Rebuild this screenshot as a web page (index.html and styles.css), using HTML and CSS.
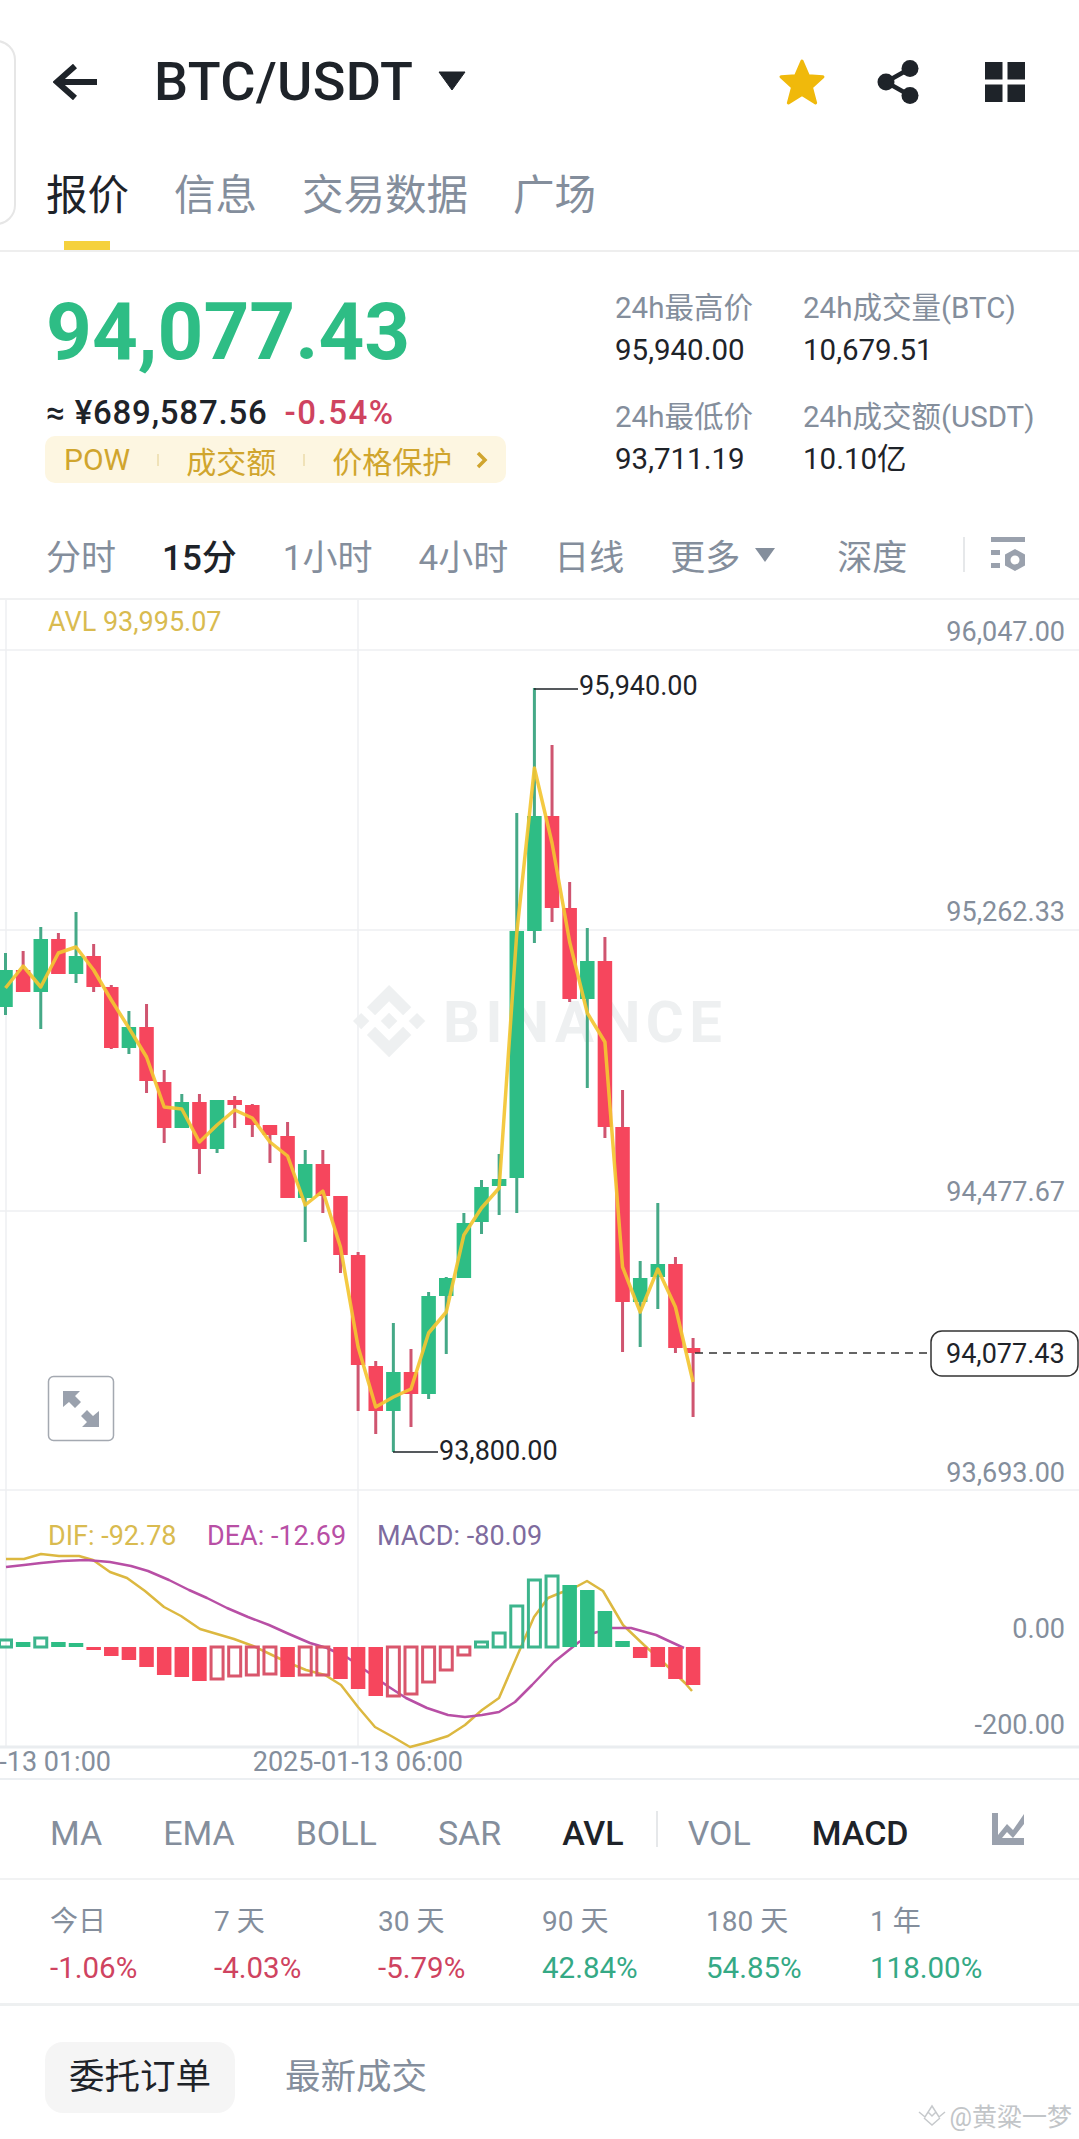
FILE: index.html
```html
<!DOCTYPE html>
<html lang="zh-CN">
<head>
  <meta charset="UTF-8" />
  <meta name="viewport" content="width=device-width, initial-scale=1.0"/>
  <title>BTC/USDT</title>
  <link rel="stylesheet" href="styles.css">
</head>
<body>
  <div class="page">
    <div class="side-tab"></div>

    <header class="topbar">
      <svg class="back" width="45" height="36" viewBox="0 0 45 36"><path d="M44 18H4M22 2 4 18l18 16" fill="none" stroke="#1e2329" stroke-width="6"/></svg>
      <h1 class="pair">BTC/USDT</h1>
      <svg class="caret" width="28" height="20" viewBox="0 0 28 20"><path d="M1 1h26L14 19z" fill="#1e2329" stroke="#1e2329" stroke-linejoin="round"/></svg>
      <div class="top-icons">
        <svg class="star" width="46" height="48" viewBox="0 0 44 46"><path d="M22 3l6 14 14 1-11 10 4 15-13-8-13 8 4-15L2 18l14-1z" fill="#f0b90b" stroke="#f0b90b" stroke-width="3" stroke-linejoin="round"/></svg>
        <svg width="42" height="44" viewBox="0 0 42 44"><g fill="#1e2329"><circle cx="9" cy="22" r="8.5"/><circle cx="33" cy="8.5" r="8.5"/><circle cx="33" cy="35.5" r="8.5"/></g><path d="M33 8.5 9 22l24 13.5" fill="none" stroke="#1e2329" stroke-width="4.5"/></svg>
        <svg class="apps" width="40" height="40" viewBox="0 0 40 40"><g fill="#1e2329"><rect width="17.500" height="17.500"/><rect x="22.500" width="17.500" height="17.500"/><rect y="22.500" width="17.500" height="17.500"/><rect x="22.500" y="22.500" width="17.500" height="17.500"/></g></svg>
      </div>
    </header>

    <nav class="tabs">
      <span class="tab active">报价</span>
      <span class="tab">信息</span>
      <span class="tab">交易数据</span>
      <span class="tab">广场</span>
    </nav>

    <section class="quote">
      <div class="quote-left">
        <div class="price">94,077.43</div>
        <div class="sub-price">≈ ¥689,587.56 <span class="down">-0.54%</span></div>
        <div class="tag">
          <span>POW</span><i></i><span>成交额</span><i></i><span>价格保护</span>
          <svg width="12" height="18" viewBox="0 0 12 18"><path d="M2 2l7 7-7 7" fill="none" stroke="#d0a52e" stroke-width="3.500"/></svg>
        </div>
      </div>
      <div class="stats">
        <div><p class="stat-label">24h最高价</p><p class="stat-value">95,940.00</p></div>
        <div><p class="stat-label">24h成交量(BTC)</p><p class="stat-value">10,679.51</p></div>
        <div><p class="stat-label">24h最低价</p><p class="stat-value">93,711.19</p></div>
        <div><p class="stat-label">24h成交额(USDT)</p><p class="stat-value">10.10亿</p></div>
      </div>
    </section>

    <div class="intervals">
      <span>分时</span>
      <span class="on">15分</span>
      <span>1小时</span>
      <span>4小时</span>
      <span>日线</span>
      <span class="more">更多<svg width="20" height="14" viewBox="0 0 20 14"><path d="M0 0h20L10 14z" fill="#848e9c"/></svg></span>
      <span class="depth">深度</span>
      <b class="divider"></b>
      <svg class="setup" width="34" height="35" viewBox="0 0 34 35"><g fill="#9aa1ad"><rect width="34" height="5"/><rect y="13" width="9" height="5"/><rect y="26" width="9" height="5"/><path fill-rule="evenodd" d="M24 12l10 5.500v11L24 34l-10-5.500v-11zM24 18.500a4.500 4.500 0 1 0 0 9 4.500 4.500 0 0 0 0-9z"/></g></svg>
    </div>

    <svg id="chart" class="chart" viewBox="0 600 1079 1178" width="1079" height="1178">
      <g class="grid">
        <path d="M0 650H1079M0 930H1079M0 1211H1079M0 1490H1079M6 600V1747M358 600V1747"/>
        <path class="base" d="M0 1747H1079"/>
      </g>

      <g class="watermark">
        <g transform="translate(353 985) scale(.57)">
          <path d="M38.730 53.200l24.590-24.580 24.600 24.600 14.300-14.310L63.320 0 24.430 38.900zM0 63.310l14.300-14.310 14.310 14.310-14.310 14.300zM38.730 73.410l24.590 24.590 24.600-24.600 14.310 14.290-38.900 38.910-38.910-38.880zM98.010 63.310l14.300-14.310 14.300 14.300-14.300 14.310zM77.830 63.300 63.320 48.780 48.810 63.280l14.510 14.500z"/>
        </g>
        <text x="443" y="1042">BINANCE</text>
      </g>

      <g id="candles"></g>
      <polyline id="avl" class="avl-line"/>

      <path class="leader" d="M534 689H578M393 1452H438"/>
      <text class="label dark" x="579" y="695">95,940.00</text>
      <text class="label dark" x="439" y="1460">93,800.00</text>
      <text class="label yellow" x="48" y="631">AVL 93,995.07</text>

      <g class="axis">
        <text x="1065" y="641">96,047.00</text>
        <text x="1065" y="921">95,262.33</text>
        <text x="1065" y="1201">94,477.67</text>
        <text x="1065" y="1482">93,693.00</text>
        <text x="1065" y="1638">0.00</text>
        <text x="1065" y="1734">-200.00</text>
      </g>

      <path class="last-line" d="M695 1353H931"/>
      <rect class="last-box" x="931" y="1331" width="147" height="45" rx="11"/>
      <text class="label dark" x="946" y="1363">94,077.43</text>

      <g class="expand">
        <rect x="48.500" y="1376.500" width="65" height="64" rx="5"/>
        <path d="M63 1391h17l-5 5 6 6-6 6-6-6-6 5zM99 1427H82l5-5-6-6 6-6 6 6 6-5z"/>
      </g>

      <text class="label yellow" x="48" y="1545">DIF: -92.78</text>
      <text class="label pink" x="207" y="1545">DEA: -12.69</text>
      <text class="label violet" x="377" y="1545">MACD: -80.09</text>

      <polyline id="dif" class="dif-line"/>
      <polyline id="dea" class="dea-line"/>
      <g id="macd"></g>

      <g class="axis">
        <text x="111" y="1771">-13 01:00</text>
        <text x="463" y="1771">2025-01-13 06:00</text>
      </g>
    </svg>

    <div class="indicators">
      <span>MA</span>
      <span>EMA</span>
      <span>BOLL</span>
      <span>SAR</span>
      <span class="on">AVL</span>
      <b class="divider"></b>
      <span>VOL</span>
      <span class="on">MACD</span>
      <svg class="ind-icon" width="32" height="32" viewBox="0 0 32 32"><path d="M0 0h6v22l9-11 6 6L32 1v10L21 25l-6-6-5 6h22v7H0z" fill="#9aa1ad"/></svg>
    </div>

    <div class="periods">
      <div><p>今日</p><p class="down">-1.06%</p></div>
      <div><p>7 天</p><p class="down">-4.03%</p></div>
      <div><p>30 天</p><p class="down">-5.79%</p></div>
      <div><p>90 天</p><p class="up">42.84%</p></div>
      <div><p>180 天</p><p class="up">54.85%</p></div>
      <div><p>1 年</p><p class="up">118.00%</p></div>
    </div>

    <div class="orders">
      <span class="order-tab on">委托订单</span>
      <span class="order-tab">最新成交</span>
    </div>

    <div class="credit">
      <svg width="29" height="22" viewBox="0 0 29 22"><path d="M1 8l6 5 7-11 7 11 6-5M6 14l8 7 8-7M10 8l4 4 4-4" fill="none" stroke="#c6c9cc" stroke-width="1.500"/></svg>
      <span>@黄粱一梦</span>
    </div>
  </div>

  <script src="chart.js"></script>
</body>
</html>
```

FILE: styles.css
```css
* { box-sizing: border-box; }
html, body { margin: 0; padding: 0; background: #fff; }
body { font-family: Roboto, "Noto Sans CJK SC", sans-serif; color: #1e2329; }
p, h1 { margin: 0; font-weight: normal; }
.page { position: relative; width: 1079px; height: 2139px; overflow: hidden; }

.side-tab { position: absolute; left: -30px; top: 40px; width: 46px; height: 185px; border: 2px solid #e6e6e6; border-radius: 20px; }

.topbar { display: flex; align-items: center; height: 84px; margin-top: 40px; padding: 0 54px 0 53px; }
.pair { margin-left: 56px; font-size: 54px; font-weight: 500; line-height: 84px; letter-spacing: .3px; }
.caret { margin-left: 25px; margin-top: -2px; }
.top-icons { display: flex; align-items: center; margin-left: auto; }
.star { margin-right: 52px; }
.apps { margin-left: 66px; }

.tabs { display: flex; gap: 45px; margin-top: 42px; padding: 0 46px 24px; border-bottom: 2px solid #eeeeee; }
.tab { position: relative; font-size: 41.500px; line-height: 60px; color: #848e9c; }
.tab.active { color: #1e2329; }
.tab.active::after { content: ""; position: absolute; left: 18px; bottom: -24px; width: 46px; height: 9px; background: #f5d13d; }

.quote { display: flex; padding: 36px 0 32px 46px; }
.quote-left { width: 569px; }
.price { margin-top: 4px; font-size: 80px; font-weight: 700; line-height: 80px; color: #2ebd85; white-space: nowrap; }
.sub-price { margin-top: 21px; font-size: 33px; font-weight: 500; line-height: 40px; letter-spacing: .8px; white-space: nowrap; }
.down { color: #cf4360; }
.up { color: #35a985; }
.sub-price .down { margin-left: 8px; letter-spacing: 1.500px; }

.tag { display: flex; align-items: center; width: 461px; height: 47px; margin-top: 3px; margin-left: -1px; padding-left: 19px; background: #fdf6e1; border-radius: 10px; font-size: 30px; color: #d0a52e; }
.tag i { width: 2px; height: 12px; margin: 0 27px; background: #f0e2b8; }
.tag svg { margin-left: 24px; }

.stats { display: grid; grid-template-columns: 188px 1fr; row-gap: 23px; }
.stat-label { font-size: 29.500px; line-height: 40px; color: #848e9c; white-space: nowrap; }
.stat-value { font-size: 29.500px; line-height: 44px; white-space: nowrap; }

.intervals { display: flex; align-items: center; gap: 46px; height: 85px; padding: 0 54px 4px 46px; font-size: 35px; color: #848e9c; border-bottom: 2px solid #f0f1f2; white-space: nowrap; }
.intervals .on { color: #1e2329; font-weight: 500; }
.more { display: flex; align-items: center; gap: 15px; }
.depth { margin-left: 16px; }
.divider { display: block; width: 2px; background: #e6e8ea; }
.intervals .divider { height: 35px; margin-left: auto; }
.setup { margin-left: -20px; }

.chart { display: block; box-sizing: content-box; font-family: Roboto, sans-serif; border-bottom: 2px solid #eceff2; }
.grid path { fill: none; stroke: #eef0f2; stroke-width: 1.500; }
.grid .base { stroke-width: 3; stroke: #eaedf0; }
.watermark { fill: #eef0f1; }
.watermark text { font-size: 58px; font-weight: 700; letter-spacing: 5.500px; }
.label { font-size: 27px; }
.dark { fill: #1e2329; }
.yellow { fill: #d9bb50; }
.pink { fill: #b84fa5; }
.violet { fill: #7e6b9e; }
.axis text { font-size: 27px; fill: #848e9c; text-anchor: end; }
.leader { fill: none; stroke: #1e2329; stroke-width: 1.500; }
.last-line { fill: none; stroke: #333; stroke-width: 1.500; stroke-dasharray: 8 6; }
.last-box { fill: #fff; stroke: #333; stroke-width: 1.500; }
.expand rect { fill: none; stroke: #a4a9b1; stroke-width: 1.500; }
.expand path { fill: #9aa1ad; }
.avl-line { fill: none; stroke: #f3c532; stroke-width: 3.500; stroke-linejoin: round; opacity: .92; }
.dif-line { fill: none; stroke: #dcb840; stroke-width: 2.500; stroke-linejoin: round; }
.dea-line { fill: none; stroke: #b84fa5; stroke-width: 2.500; stroke-linejoin: round; }

.indicators { display: flex; align-items: center; height: 100px; padding: 8px 55px 0 50px; font-size: 34px; color: #848e9c; border-bottom: 2px solid #f1f2f3; }
.indicators span { margin-right: 61px; white-space: nowrap; }
.indicators .on { color: #1e2329; font-weight: 500; }
.indicators .divider { height: 36px; margin: -8px 30px 0 -29px; }
.ind-icon { margin-left: auto; margin-top: -8px; }

.periods { display: grid; grid-template-columns: repeat(6, 164px); height: 126px; padding: 18px 0 0 50px; border-bottom: 3px solid #eef0f1; }
.periods p { font-size: 29.500px; line-height: 47px; color: #848e9c; white-space: nowrap; }
.periods p:first-child { font-size: 28px; }
.periods p.down { color: #cf4360; }
.periods p.up { color: #35a985; }

.orders { display: flex; align-items: center; gap: 50px; padding: 36px 0 0 45px; }
.order-tab { font-size: 35.500px; line-height: 71px; color: #848e9c; }
.order-tab.on { padding: 0 24px; background: #f5f5f5; border-radius: 18px; color: #1e2329; }

.credit { position: absolute; right: 7px; bottom: 6px; display: flex; align-items: center; gap: 3px; font-size: 25px; color: #c2c5c8; }
```

FILE: chart.js
```js
// 15m candles: colour, high, body top, body bottom, low (page pixels)
var candles = [
  ['g',953,970,1007,1015],['r',951,970,992,992],['g',927,939,992,1029],['r',933,939,974,974],
  ['g',912,956,974,983],['r',944,956,987,992],['r',985,987,1048,1049],['g',1011,1027,1048,1054],
  ['r',1004,1027,1081,1093],['r',1070,1082,1128,1143],['g',1094,1102,1128,1128],['r',1094,1102,1149,1174],
  ['g',1100,1100,1149,1153],['r',1096,1100,1105,1128],['r',1104,1105,1125,1137],['r',1125,1125,1135,1163],
  ['r',1122,1136,1198,1198],['g',1150,1164,1198,1242],['r',1150,1164,1196,1213],['r',1196,1196,1255,1273],
  ['r',1252,1255,1365,1411],['r',1361,1366,1411,1434],['g',1323,1372,1411,1452],['r',1349,1372,1394,1427],
  ['g',1292,1296,1394,1399],['g',1277,1278,1296,1354],['g',1213,1223,1278,1278],['g',1180,1187,1222,1234],
  ['g',1154,1179,1186,1215],['g',813,931,1178,1213],['g',688,816,931,943],['r',745,816,908,922],
  ['r',882,908,999,1002],['g',928,961,999,1088],['r',937,961,1127,1138],['r',1090,1127,1302,1352],
  ['g',1261,1278,1302,1347],['g',1203,1264,1277,1309],['r',1257,1264,1348,1353],['r',1338,1348,1353,1417]
];

var avl = [988,966,987,953,947,970,1000,1028,1057,1107,1109,1142,1125,1110,1118,1142,1156,1205,1191,1247,
  1347,1407,1397,1389,1333,1312,1235,1208,1188,933,768,843,942,1013,1042,1267,1312,1269,1307,1382];

// signed histogram height, 1 = hollow bar
var macd = [
  [7,1],[5,0],[9,1],[5,0],[4,0],[-3,0],[-9,0],[-13,0],[-20,0],[-28,0],[-30,0],[-34,0],[-32,1],[-29,1],[-28,1],[-27,1],
  [-30,0],[-28,1],[-28,1],[-32,0],[-42,0],[-49,0],[-49,1],[-47,1],[-35,1],[-23,1],[-8,1],[5,1],[14,1],[41,1],
  [67,1],[71,1],[62,0],[57,0],[36,0],[6,0],[-11,0],[-20,0],[-32,0],[-38,0]
];

var dif = '6,1559 24,1559 41,1554 59,1556 79,1556 93,1560 110,1572 127,1578 145,1591 164,1607 181,1616 200,1629 217,1634 234,1639 253,1646 272,1655 289,1663 306,1670 325,1675 341,1685 358,1707 375,1727 393,1737 410,1747 429,1742 448,1736 465,1725 482,1710 499,1698 521,1647 534,1617 548,1598 560,1593 574,1588 587,1581 603,1591 623,1625 644,1645 664,1663 685,1683 692,1691';
var dea = '6,1567 24,1565 41,1563 62,1561 86,1560 110,1562 131,1566 148,1571 169,1580 189,1590 207,1598 227,1608 248,1617 269,1625 289,1634 310,1643 327,1648 348,1658 365,1670 386,1685 406,1698 427,1708 448,1715 465,1717 482,1715 499,1712 515,1702 532,1685 554,1662 579,1642 594,1633 611,1628 631,1628 656,1635 684,1648';

var NS = 'http://www.w3.org/2000/svg';
var GREEN = '#2ebd85', RED = '#f6465d';
var WICK_GREEN = '#45a987', WICK_RED = '#cf5570';

function cx(i) { return 5.5 + 17.63 * i; }

function add(parent, tag, attrs) {
  var el = document.createElementNS(NS, tag);
  for (var k in attrs) el.setAttribute(k, attrs[k]);
  parent.appendChild(el);
  return el;
}

var candleGroup = document.getElementById('candles');
candles.forEach(function (c, i) {
  var x = cx(i);
  add(candleGroup, 'rect', { x: x - 1.5, y: c[1], width: 3, height: c[4] - c[1], fill: c[0] == 'g' ? WICK_GREEN : WICK_RED });
  add(candleGroup, 'rect', { x: x - 7.25, y: c[2], width: 14.5, height: c[3] - c[2], fill: c[0] == 'g' ? GREEN : RED });
});

document.getElementById('avl').setAttribute('points', avl.map(function (y, i) { return cx(i) + ',' + y; }).join(' '));
document.getElementById('dif').setAttribute('points', dif);
document.getElementById('dea').setAttribute('points', dea);

var macdGroup = document.getElementById('macd');
var ZERO = 1647;
macd.forEach(function (m, i) {
  var x = cx(i), h = m[0], up = h > 0;
  var y = up ? ZERO - h : ZERO, abs = Math.abs(h);
  if (m[1]) {
    add(macdGroup, 'rect', { x: x - 6, y: y, width: 12, height: abs, fill: 'none', stroke: up ? '#3db58d' : '#d9566c', 'stroke-width': 3 });
  } else {
    add(macdGroup, 'rect', { x: x - 7.25, y: y, width: 14.5, height: abs, fill: up ? GREEN : RED });
  }
});
```
